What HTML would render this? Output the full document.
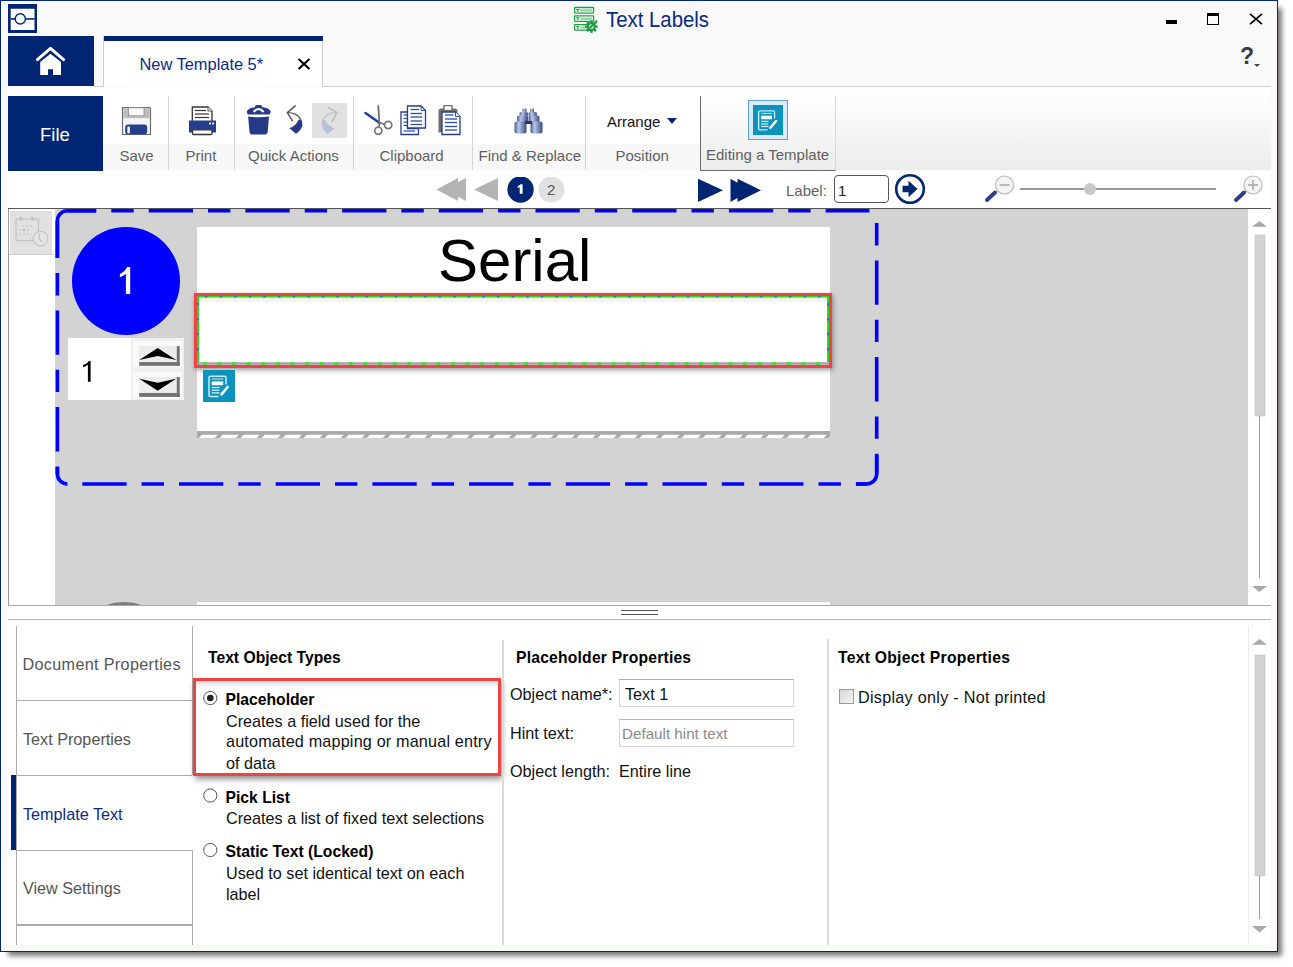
<!DOCTYPE html>
<html><head><meta charset="utf-8">
<style>
html,body{margin:0;padding:0}
body{width:1293px;height:967px;background:#fff;position:relative;overflow:hidden;font-family:"Liberation Sans",sans-serif}
.a{position:absolute}
.t{position:absolute;line-height:1;white-space:nowrap}
.navy{background:#002673}
.sep{position:absolute;width:1px;background:#d4d4d4}
.lbl{position:absolute;line-height:1;white-space:nowrap;font-size:15px;color:#5f5f5f}
</style></head>
<body>
<!-- window shadow -->
<div class="a" style="left:2px;top:2px;width:1276px;height:950px;box-shadow:5px 5px 5px -1px rgba(0,0,0,0.52)"></div>
<!-- window -->
<div class="a" id="win" style="left:0;top:0;width:1276px;height:950px;border:1px solid #002673;background:#f9f9f9;overflow:hidden">
</div>
<div class="a" id="content" style="left:0;top:0;width:1278px;height:952px">

<!-- ===== TITLE BAR ===== -->
<svg class="a" style="left:8px;top:4px" width="30" height="30" viewBox="0 0 30 30">
 <rect x="0" y="0" width="29" height="29" fill="#002673"/>
 <rect x="2.7" y="4.7" width="23.8" height="21.4" rx="0.6" fill="#fff"/>
 <line x1="2.7" y1="14.9" x2="26.5" y2="14.9" stroke="#002673" stroke-width="1.6"/>
 <circle cx="12.3" cy="14.9" r="5.1" fill="#fff" stroke="#002673" stroke-width="1.4"/>
</svg>

<svg class="a" style="left:568px;top:2px" width="36" height="34" viewBox="568 2 36 34">
 <g fill="#fff" stroke="#1f9e44" stroke-width="1.3">
  <rect x="574.6" y="7.5" width="19" height="5.6" rx="0.8"/>
  <rect x="574.6" y="15.8" width="19" height="5.6" rx="0.8"/>
  <rect x="574.6" y="24.6" width="19" height="5.6" rx="0.8"/>
 </g>
 <g fill="#8fd1a4"><rect x="580.3" y="9.3" width="12" height="2.2"/><rect x="580.3" y="17.6" width="12" height="2.2"/><rect x="580.3" y="26.4" width="8" height="2.2"/></g>
 <g fill="#1f9e44"><rect x="576.2" y="9" width="3.2" height="1.1"/><rect x="577.3" y="9" width="1.1" height="3"/><rect x="576.2" y="17.3" width="3.2" height="1.1"/><rect x="577.3" y="17.3" width="1.1" height="3"/><rect x="576.2" y="26.1" width="3.2" height="1.1"/><rect x="577.3" y="26.1" width="1.1" height="3"/></g>
 <g fill="#1f9e44"><rect x="590.20" y="20.30" width="2.4" height="2.6" transform="rotate(0 591.4 26.6)"/><rect x="590.20" y="20.30" width="2.4" height="2.6" transform="rotate(45 591.4 26.6)"/><rect x="590.20" y="20.30" width="2.4" height="2.6" transform="rotate(90 591.4 26.6)"/><rect x="590.20" y="20.30" width="2.4" height="2.6" transform="rotate(135 591.4 26.6)"/><rect x="590.20" y="20.30" width="2.4" height="2.6" transform="rotate(180 591.4 26.6)"/><rect x="590.20" y="20.30" width="2.4" height="2.6" transform="rotate(225 591.4 26.6)"/><rect x="590.20" y="20.30" width="2.4" height="2.6" transform="rotate(270 591.4 26.6)"/><rect x="590.20" y="20.30" width="2.4" height="2.6" transform="rotate(315 591.4 26.6)"/></g>
 <circle cx="591.4" cy="26.6" r="4.6" fill="#1f9e44"/>
 <circle cx="591.4" cy="26.6" r="2.4" fill="#fff"/>
 <path d="M590.3 27.6 L596.5 21.3" stroke="#1f9e44" stroke-width="2.2" stroke-linecap="round"/>
</svg>
<div class="t" style="left:605.5px;top:8.7px;font-size:22.5px;color:#0b2a82;transform:scaleX(0.905);transform-origin:0 0">Text Labels</div>

<!-- min max close -->
<div class="a" style="left:1166px;top:20px;width:11px;height:4px;background:#000"></div>
<div class="a" style="left:1207px;top:13px;width:10px;height:8px;border:1px solid #000;border-top-width:3px"></div>
<svg class="a" style="left:1249px;top:13px" width="14" height="12" viewBox="0 0 14 12"><path d="M1 0.8 L13 11.2 M13 0.8 L1 11.2" stroke="#000" stroke-width="1.6"/></svg>

<!-- help -->
<div class="t" style="left:1240px;top:45px;font-size:23px;font-weight:bold;color:#3c3c3c">?</div>
<svg class="a" style="left:1254px;top:64px" width="6" height="3" viewBox="0 0 6 3"><path d="M0 0 L6 0 L3 3 Z" fill="#444"/></svg>

<!-- ===== TAB ROW ===== -->
<div class="a navy" style="left:8px;top:36px;width:86px;height:50px"></div>
<svg class="a" style="left:25px;top:38px" width="50" height="44" viewBox="25 38 50 44">
 <path d="M37.4 59.6 L50.5 48.4 L63.6 59.6" fill="none" stroke="#fff" stroke-width="3" stroke-linecap="round" stroke-linejoin="round"/>
 <path d="M40.2 62 L50.5 53.8 L61 62 L61 75 L53 75 L53 69.2 L48 69.2 L48 75 L40.2 75 Z" fill="#fff"/>
</svg>
<div class="a" style="left:94px;top:86px;width:10px;height:1px;background:#cfcfcf"></div>
<div class="a" style="left:103px;top:36px;width:1px;height:51px;background:#cfcfcf"></div>
<div class="a" style="left:104px;top:36px;width:218px;height:50px;background:#fff"></div>
<div class="a navy" style="left:104px;top:36px;width:219px;height:5px"></div>
<div class="a" style="left:322px;top:41px;width:1px;height:46px;background:#cfcfcf"></div>
<div class="a" style="left:322px;top:86px;width:949px;height:1px;background:#cfcfcf"></div>
<div class="t" style="left:139.5px;top:55.6px;font-size:16.4px;color:#0b2a82">New Template 5*</div>
<svg class="a" style="left:297px;top:58px" width="14" height="12" viewBox="0 0 14 12"><path d="M1.5 1 L12.5 11 M12.5 1 L1.5 11" stroke="#000" stroke-width="2"/></svg>

<!-- ===== RIBBON ===== -->
<div class="a" style="left:8px;top:87px;width:1263px;height:83px;background:linear-gradient(#ffffff 0%,#fdfdfd 15%,#ececec 100%)"></div>
<div class="a" style="left:103px;top:87px;width:597px;height:83px;background:#fff"></div>
<div class="a" style="left:103px;top:144px;width:597px;height:26px;background:#f8f8f8"></div>
<div class="a navy" style="left:8px;top:96px;width:95px;height:75px"></div>
<div class="t" style="left:40px;top:125.5px;font-size:18.5px;color:#fff">File</div>

<div class="sep" style="left:168px;top:96px;height:74px"></div>
<div class="sep" style="left:234px;top:96px;height:74px"></div>
<div class="sep" style="left:353px;top:96px;height:74px"></div>
<div class="sep" style="left:472px;top:96px;height:74px"></div>
<div class="sep" style="left:585px;top:96px;height:74px"></div>

<!-- editing a template group -->
<div class="a" style="left:700px;top:96px;width:134px;height:74px;background:linear-gradient(#ffffff,#ececec);border-left:1px solid #6a6a6a;border-bottom:1px solid #6a6a6a;border-right:1px solid #d8d8d8"></div>

<div class="lbl" style="left:119.5px;top:148.3px">Save</div>
<div class="lbl" style="left:185.5px;top:148.3px">Print</div>
<div class="lbl" style="left:248px;top:148.3px">Quick Actions</div>
<div class="lbl" style="left:379.5px;top:148.3px">Clipboard</div>
<div class="lbl" style="left:478.5px;top:148.3px">Find &amp; Replace</div>
<div class="lbl" style="left:615.5px;top:148.3px">Position</div>
<div class="lbl" style="left:706px;top:147.3px">Editing a Template</div>
<div class="t" style="left:607px;top:113.8px;font-size:15px;color:#111">Arrange</div>
<svg class="a" style="left:667px;top:118px" width="10" height="6" viewBox="0 0 10 6"><path d="M0 0 L10 0 L5 6 Z" fill="#002673"/></svg>

<!-- ICONS placeholder -->

<!-- save icon -->
<svg class="a" style="left:121px;top:106px" width="31" height="30" viewBox="0 0 31 30">
 <path d="M1.5 1.5 H28.5 Q29.5 1.5 29.5 2.5 V28.5 H1.5 Z" fill="#f4f4f4" stroke="#6e6e6e" stroke-width="1.2"/>
 <rect x="2.2" y="2.2" width="26.6" height="10" fill="#bdbdbd"/>
 <rect x="7.5" y="1.8" width="15.5" height="8" fill="#fafafa" stroke="#8a8a8a" stroke-width="0.8"/>
 <rect x="4.2" y="18.5" width="22" height="10" rx="3" fill="#243f8c"/>
 <rect x="6.3" y="20.5" width="2.6" height="7" rx="1" fill="#f0f0f0"/>
</svg>
<!-- print icon -->
<svg class="a" style="left:188px;top:106px" width="29" height="30" viewBox="0 0 29 30">
 <path d="M4.3 15 V1 H20 L24 5 V15" fill="#fff" stroke="#333" stroke-width="1.3"/>
 <path d="M20 1 V5 H24" fill="#fff" stroke="#333" stroke-width="0.8"/>
 <g stroke="#333" stroke-width="1.2"><line x1="7" y1="4.5" x2="18" y2="4.5"/><line x1="7" y1="8" x2="21" y2="8"/><line x1="7" y1="11.5" x2="21" y2="11.5"/></g>
 <rect x="1" y="14.5" width="27" height="12" fill="#243f8c"/>
 <rect x="21" y="16.5" width="2" height="2" fill="#e8e8f4"/><rect x="24" y="16.5" width="2" height="2" fill="#e8e8f4"/>
 <rect x="4.5" y="23.8" width="19.5" height="4.7" rx="1" fill="#fff" stroke="#333" stroke-width="1.3"/>
</svg>
<!-- trash -->
<svg class="a" style="left:245px;top:104px" width="28" height="32" viewBox="245 104 28 32">
 <path d="M254.8 107.2 Q255 105.1 257 105.1 H260.2 Q262.3 105.1 262.4 107.2 Q269 108 270.5 111 Q271 114.5 268 114.5 H249.5 Q246.5 114.5 247 111 Q248.5 108 254.8 107.2 Z" fill="#243a86"/>
 <path d="M253.6 112 Q258.6 105.8 263.6 112" fill="none" stroke="#fff" stroke-width="2"/>
 <path d="M248.1 116.6 Q258.6 118 269 116.6 L267.7 131.8 Q267.5 134.6 264.5 134.6 H252.6 Q249.7 134.6 249.5 131.8 Z" fill="#243a86"/>
</svg>
<!-- undo -->
<svg class="a" style="left:284px;top:103px" width="22" height="34" viewBox="284 103 22 34">
 <path d="M295.3 105.9 L287.3 112.6 L292.4 120.8" fill="none" stroke="#5a5a5a" stroke-width="1.5" stroke-linecap="round" stroke-linejoin="round"/>
 <path d="M287.3 112.6 Q296.5 112.4 300.2 118.6 Q302.3 122.5 301.6 127" fill="none" stroke="#5a5a5a" stroke-width="1.3"/>
 <path d="M298.8 119.8 L301.6 120.4 Q303 125.5 300.4 129.5 Q298.5 132 296 133.6 L289.6 128.3 Q295.5 126.5 298.8 119.8 Z" fill="#243a86" stroke="#555" stroke-width="0.5"/>
</svg>
<!-- redo disabled -->
<div class="a" style="left:312px;top:103px;width:35px;height:35px;background:#e1e1e1"></div>
<svg class="a" style="left:315px;top:103px" width="26" height="34" viewBox="315 103 26 34">
 <path d="M328.2 107.4 L336.9 112.4 L331.9 121.9" fill="none" stroke="#b9b9b9" stroke-width="1.5" stroke-linecap="round" stroke-linejoin="round"/>
 <path d="M336.9 112.4 Q327 113 323.6 118.8 Q321.8 122.5 322.6 127" fill="none" stroke="#c2c2c2" stroke-width="1.3"/>
 <path d="M325.2 120 L322.4 120.6 Q321 125.5 323.4 129.5 Q325.2 132.3 327.4 133.9 L334.8 128.5 Q328.5 126.5 325.2 120 Z" fill="#b8bfd6"/>
</svg>
<!-- scissors -->
<svg class="a" style="left:364px;top:105px" width="30" height="31" viewBox="0 0 30 31">
 <path d="M1.5 8 L15 17.5" stroke="#243f8c" stroke-width="2.6" stroke-linecap="round"/>
 <path d="M14.3 1 L15.5 19.5" stroke="#6e6e6e" stroke-width="1.8" stroke-linecap="round"/>
 <path d="M15 17.2 L20.5 19.5" stroke="#6e6e6e" stroke-width="1.6"/>
 <circle cx="24.2" cy="20" r="3.6" fill="none" stroke="#777" stroke-width="1.7"/>
 <circle cx="14.3" cy="25.8" r="3.6" fill="none" stroke="#777" stroke-width="1.7"/>
 <path d="M15.2 19.5 L14.8 22" stroke="#777" stroke-width="1.6"/>
</svg>
<!-- copy -->
<svg class="a" style="left:400px;top:105px" width="27" height="31" viewBox="0 0 27 31">
 <path d="M1 7 H7.5 V23.5 H18.5 V29.5 H1 Z" fill="#fff" stroke="#243f8c" stroke-width="1.3"/>
 <g stroke="#2e4c9e" stroke-width="1.2"><line x1="3.5" y1="10" x2="7" y2="10"/><line x1="3.5" y1="13.5" x2="7" y2="13.5"/><line x1="3.5" y1="17" x2="7" y2="17"/><line x1="3.5" y1="20.5" x2="7" y2="20.5"/><line x1="3.5" y1="26" x2="15" y2="26"/></g>
 <path d="M7.5 1 H21 L25.5 5.5 V23 H7.5 Z" fill="#fff" stroke="#243f8c" stroke-width="1.3"/>
 <path d="M21 1 V5.5 H25.5" fill="none" stroke="#243f8c" stroke-width="0.9"/>
 <g stroke="#2e4c9e" stroke-width="1.3"><line x1="10.5" y1="4.5" x2="19" y2="4.5"/><line x1="10.5" y1="8.5" x2="22" y2="8.5"/><line x1="10.5" y1="12" x2="22" y2="12"/><line x1="10.5" y1="16" x2="22" y2="16"/><line x1="10.5" y1="19.5" x2="22" y2="19.5"/></g>
</svg>
<!-- paste -->
<svg class="a" style="left:437px;top:105px" width="25" height="31" viewBox="0 0 25 31">
 <path d="M1.5 6 Q1.5 3.5 4 3.5 H18 Q20.5 3.5 20.5 6 V27.5 H1.5 Z" fill="#6e6e6e"/>
 <rect x="7" y="0.5" width="8" height="5" fill="#fff" stroke="#6e6e6e" stroke-width="1.4"/>
 <path d="M5 7 H18.5 L23 11.5 V29.5 H5 Z" fill="#fff" stroke="#243f8c" stroke-width="1.3"/>
 <path d="M18.5 7 V11.5 H23" fill="#fff" stroke="#243f8c" stroke-width="0.9"/>
 <g stroke="#2e4c9e" stroke-width="1.3"><line x1="8" y1="10" x2="16.5" y2="10"/><line x1="8" y1="14" x2="20" y2="14"/><line x1="8" y1="17.5" x2="20" y2="17.5"/><line x1="8" y1="21.5" x2="20" y2="21.5"/><line x1="8" y1="25" x2="20" y2="25"/></g>
</svg>
<!-- binoculars -->
<svg class="a" style="left:513px;top:106px" width="31" height="29" viewBox="0 0 31 29">
 <defs><linearGradient id="bg1" x1="0" x2="1" y1="0" y2="0"><stop offset="0" stop-color="#4a5a8c"/><stop offset="0.35" stop-color="#b8c8ea"/><stop offset="1" stop-color="#3c4a80"/></linearGradient></defs>
 <g fill="url(#bg1)">
 <rect x="9.5" y="2.5" width="4" height="4" rx="1"/><rect x="17" y="2.5" width="4" height="4" rx="1"/>
 <rect x="6.5" y="6" width="8.5" height="4" rx="1.5"/><rect x="15.5" y="6" width="8.5" height="4" rx="1.5"/>
 <rect x="4" y="9.5" width="11" height="6.5" rx="1.5"/><rect x="15.5" y="9.5" width="11" height="6.5" rx="1.5"/>
 <rect x="1.5" y="15.5" width="12" height="12" rx="2"/><rect x="17.5" y="15.5" width="12" height="12" rx="2"/>
 </g>
 <rect x="12" y="15" width="7" height="3" fill="#2a3560"/>
</svg>
<!-- editing template icon -->
<div class="a" style="left:748px;top:100px;width:38px;height:38px;border:1px solid #5aa2e6;background:#dce9f6"></div>
<svg class="a" style="left:753px;top:105px" width="30" height="30" viewBox="0 0 32 32">
 <rect x="0" y="0" width="32" height="32" fill="#0a93bd"/>
 <path d="M23 14.5 V7.6 Q23 6.3 21.7 6.3 H7.3 Q6 6.3 6 7.6 V25.3 Q6 26.5 7.3 26.5 H15.5" fill="none" stroke="#cdebf4" stroke-width="1.5"/>
 <rect x="8.7" y="8.4" width="11.5" height="1.1" fill="#bfe4f0"/>
 <rect x="8.7" y="11.4" width="11.5" height="3.8" fill="#fff"/>
 <g stroke="#d5eef6" stroke-width="1.3"><line x1="8.7" y1="17.5" x2="16.5" y2="17.5"/><line x1="8.7" y1="20.2" x2="16.5" y2="20.2"/><line x1="8.7" y1="22.9" x2="16.5" y2="22.9"/></g>
 <path d="M18.5 24.3 L24.6 17" stroke="#fff" stroke-width="2.6" stroke-linecap="round"/>
</svg>


<!-- ===== NAV ROW ===== -->
<div class="a" style="left:8px;top:171px;width:1263px;height:37px;background:#fff"></div>
<div class="a" style="left:8px;top:208px;width:1263px;height:1px;background:#555"></div>

<!-- nav arrows -->
<svg class="a" style="left:436px;top:177px" width="130" height="26" viewBox="0 0 130 26">
 <path d="M0.5 12.5 L22 1 V24 Z" fill="#b3b3b3"/>
 <path d="M8 12.5 L30 1 V24 Z" fill="#b3b3b3"/>
 <path d="M38 12.5 L62 1 V24 Z" fill="#b3b3b3"/>
 <circle cx="84.5" cy="12.5" r="13.2" fill="#002673"/>
 <circle cx="115.5" cy="12.5" r="13" fill="#e1e1e1"/>
</svg>
<svg class="a" style="left:514px;top:182px" width="12" height="14" viewBox="514 182 12 14"><path d="M519.7 193.8 H522.6 V184.3 H520.6 Q519.6 185.5 517.8 185.9 V188 Q518.9 187.8 519.7 187.3 Z" fill="#fff"/></svg>
<div class="t" style="left:547px;top:182px;font-size:15px;color:#555">2</div>
<svg class="a" style="left:697px;top:178px" width="66" height="26" viewBox="0 0 66 26">
 <path d="M1 0.8 L26 12.3 L1 24 Z" fill="#002673"/>
 <path d="M33.5 0.8 L54 12.3 L33.5 24 Z" fill="#002673"/>
 <path d="M40.5 0.8 L64 12.3 L40.5 24 Z" fill="#002673"/>
</svg>
<div class="lbl" style="left:786px;top:183.3px;font-size:15px;color:#5f5f5f">Label:</div>
<div class="a" style="left:834px;top:175px;width:53px;height:26px;border:1px solid #555;border-radius:4px;background:#fff"></div>
<div class="t" style="left:838px;top:183.3px;font-size:15px;color:#222">1</div>
<svg class="a" style="left:894px;top:173px" width="32" height="32" viewBox="0 0 32 32">
 <circle cx="16" cy="16" r="13.8" fill="#fff" stroke="#002673" stroke-width="2.6"/>
 <path d="M8.5 12.8 H14.5 V7.8 L23.5 16 L14.5 24.2 V19.2 H8.5 Z" fill="#002673"/>
</svg>
<!-- zoom slider -->
<svg class="a" style="left:984px;top:173px" width="290" height="32" viewBox="0 0 290 32">
 <circle cx="20.5" cy="12" r="9" fill="#f4f4f4" stroke="#b9b9b9" stroke-width="1.2"/>
 <line x1="15.5" y1="12" x2="25.5" y2="12" stroke="#aaa" stroke-width="1.6"/>
 <path d="M3 27 L11 19.5" stroke="#2a3f88" stroke-width="4" stroke-linecap="round"/>
 <line x1="36" y1="16" x2="232" y2="16" stroke="#999" stroke-width="2"/>
 <circle cx="106" cy="16" r="6" fill="#c9c9c9"/>
 <circle cx="269" cy="12" r="9" fill="#f4f4f4" stroke="#b9b9b9" stroke-width="1.2"/>
 <line x1="264" y1="12" x2="274" y2="12" stroke="#aaa" stroke-width="1.6"/>
 <line x1="269" y1="7" x2="269" y2="17" stroke="#aaa" stroke-width="1.6"/>
 <path d="M252 27 L260 19.5" stroke="#2a3f88" stroke-width="4" stroke-linecap="round"/>
</svg>

<!-- ===== CANVAS ===== -->
<div class="a" style="left:8px;top:209px;width:1263px;height:396px;background:#d3d3d3"></div>
<div class="a" style="left:8px;top:209px;width:47px;height:396px;background:#fff;box-shadow:inset 1px 0 0 #9a9a9a"></div>
<div class="a" style="left:10px;top:211px;width:42px;height:43px;background:#e1e1e1"></div>
<div class="a" style="left:9px;top:254px;width:45px;height:1px;background:#cfcfcf"></div>
<svg class="a" style="left:10px;top:211px" width="42" height="43" viewBox="10 211 42 43">
 <rect x="16" y="219" width="22.5" height="21.5" fill="none" stroke="#c4c4c4" stroke-width="1.3"/>
 <rect x="19.5" y="216.5" width="2.6" height="4.5" rx="1" fill="#c4c4c4"/><rect x="31" y="216.5" width="2.6" height="4.5" rx="1" fill="#c4c4c4"/>
 <g fill="#d0d0d0"><rect x="22" y="225" width="2" height="2"/><rect x="26" y="225" width="2" height="2"/><rect x="30" y="225" width="2" height="2"/><rect x="19" y="229" width="2" height="2"/><rect x="27" y="229" width="2" height="2"/><rect x="19" y="233" width="2" height="2"/><rect x="23" y="233" width="2" height="2"/><rect x="27" y="233" width="2" height="2"/></g>
 <rect x="23" y="229" width="2" height="2" fill="#aab2cc"/>
 <circle cx="40.5" cy="238.5" r="7.2" fill="#e4e4e4" stroke="#c4c4c4" stroke-width="1.1"/>
 <path d="M38.8 232.8 L39.6 239 L42.5 242.2" fill="none" stroke="#b5bccb" stroke-width="1.1"/>
</svg>
<div class="a" style="left:1248px;top:209px;width:23px;height:396px;background:#fff"></div>
<svg class="a" style="left:1250px;top:218px" width="20" height="380" viewBox="0 0 20 380">
 <path d="M2 8.8 L9.5 3 L17 8.8 Z" fill="#a9a9a9"/>
 <rect x="5" y="17" width="10" height="181" fill="#d2d2d2" stroke="#c4c4c4" stroke-width="0.6"/>
 <line x1="9.5" y1="198" x2="9.5" y2="360" stroke="#9a9a9a" stroke-width="1"/>
 <path d="M2 368 L17 368 L9.5 374 Z" fill="#a9a9a9"/>
</svg>

<!-- label card -->
<div class="a" style="left:197px;top:227px;width:633px;height:204px;background:#fff"></div>
<svg class="a" style="left:197px;top:431px" width="633" height="7" viewBox="0 0 633 7">
 <rect x="0" y="0" width="633" height="7" fill="#a9a9a9"/>
 <g fill="#fff"><path d="M-16.3 3.8 H-0.3 L-3.3 7 H-19.3 Z"/><path d="M4.7 3.8 H20.7 L17.7 7 H1.7 Z"/><path d="M25.7 3.8 H41.7 L38.7 7 H22.7 Z"/><path d="M46.7 3.8 H62.7 L59.7 7 H43.7 Z"/><path d="M67.7 3.8 H83.7 L80.7 7 H64.7 Z"/><path d="M88.7 3.8 H104.7 L101.7 7 H85.7 Z"/><path d="M109.7 3.8 H125.7 L122.7 7 H106.7 Z"/><path d="M130.7 3.8 H146.7 L143.7 7 H127.7 Z"/><path d="M151.7 3.8 H167.7 L164.7 7 H148.7 Z"/><path d="M172.7 3.8 H188.7 L185.7 7 H169.7 Z"/><path d="M193.7 3.8 H209.7 L206.7 7 H190.7 Z"/><path d="M214.7 3.8 H230.7 L227.7 7 H211.7 Z"/><path d="M235.7 3.8 H251.7 L248.7 7 H232.7 Z"/><path d="M256.7 3.8 H272.7 L269.7 7 H253.7 Z"/><path d="M277.7 3.8 H293.7 L290.7 7 H274.7 Z"/><path d="M298.7 3.8 H314.7 L311.7 7 H295.7 Z"/><path d="M319.7 3.8 H335.7 L332.7 7 H316.7 Z"/><path d="M340.7 3.8 H356.7 L353.7 7 H337.7 Z"/><path d="M361.7 3.8 H377.7 L374.7 7 H358.7 Z"/><path d="M382.7 3.8 H398.7 L395.7 7 H379.7 Z"/><path d="M403.7 3.8 H419.7 L416.7 7 H400.7 Z"/><path d="M424.7 3.8 H440.7 L437.7 7 H421.7 Z"/><path d="M445.7 3.8 H461.7 L458.7 7 H442.7 Z"/><path d="M466.7 3.8 H482.7 L479.7 7 H463.7 Z"/><path d="M487.7 3.8 H503.7 L500.7 7 H484.7 Z"/><path d="M508.7 3.8 H524.7 L521.7 7 H505.7 Z"/><path d="M529.7 3.8 H545.7 L542.7 7 H526.7 Z"/><path d="M550.7 3.8 H566.7 L563.7 7 H547.7 Z"/><path d="M571.7 3.8 H587.7 L584.7 7 H568.7 Z"/><path d="M592.7 3.8 H608.7 L605.7 7 H589.7 Z"/><path d="M613.7 3.8 H629.7 L626.7 7 H610.7 Z"/><path d="M634.7 3.8 H650.7 L647.7 7 H631.7 Z"/></g>
</svg>
<div class="t" style="left:438px;top:230.8px;font-size:60px;color:#000">Serial</div>

<!-- selected object -->
<div class="a" style="left:194px;top:293px;width:638px;height:74.5px;box-shadow:1px 2px 5px rgba(0,0,0,0.4)"></div>
<div class="a" style="left:194px;top:293px;width:632px;height:68.5px;border:3px solid #f04242;background:#fff"></div>
<div class="a" style="left:197px;top:296px;width:632px;height:8px;background:linear-gradient(#e6e6e6,#fff)"></div>
<svg class="a" style="left:197px;top:296px" width="632" height="69" viewBox="0 0 632 69">
 <line x1="0" y1="0.8" x2="632" y2="0.8" stroke="#22dd22" stroke-width="1.6"/>
 <line x1="0" y1="0.8" x2="632" y2="0.8" stroke="#2a7ab8" stroke-width="1.6" stroke-dasharray="2.5 12.1" stroke-dashoffset="-8"/>
 <line x1="1" y1="0" x2="1" y2="69" stroke="#22dd22" stroke-width="2"/>
 <line x1="1" y1="0" x2="1" y2="69" stroke="#2a7ab8" stroke-width="2" stroke-dasharray="2.5 12.5" stroke-dashoffset="-7"/>
 <line x1="631" y1="0" x2="631" y2="66" stroke="#22dd22" stroke-width="2"/>
 <line x1="631" y1="0" x2="631" y2="66" stroke="#2a7ab8" stroke-width="2" stroke-dasharray="2.5 12.5" stroke-dashoffset="-7"/>
 <line x1="0" y1="67.5" x2="632" y2="67.5" stroke="#a3a3a3" stroke-width="2.6"/>
 <line x1="0" y1="67.5" x2="632" y2="67.5" stroke="#22ee22" stroke-width="2.6" stroke-dasharray="4 10.6" stroke-dashoffset="-5.8"/>
</svg>
<svg class="a" style="left:203px;top:370px" width="32" height="32" viewBox="0 0 32 32">
 <rect x="0" y="0" width="32" height="32" fill="#0a93bd"/>
 <path d="M23 14.5 V7.6 Q23 6.3 21.7 6.3 H7.3 Q6 6.3 6 7.6 V25.3 Q6 26.5 7.3 26.5 H15.5" fill="none" stroke="#cdebf4" stroke-width="1.5"/>
 <rect x="8.7" y="8.4" width="11.5" height="1.1" fill="#bfe4f0"/>
 <rect x="8.7" y="11.4" width="11.5" height="3.8" fill="#fff"/>
 <g stroke="#d5eef6" stroke-width="1.3"><line x1="8.7" y1="17.5" x2="16.5" y2="17.5"/><line x1="8.7" y1="20.2" x2="16.5" y2="20.2"/><line x1="8.7" y1="22.9" x2="16.5" y2="22.9"/></g>
 <path d="M18.5 24.3 L24.6 17" stroke="#fff" stroke-width="2.6" stroke-linecap="round"/>
</svg>

<!-- number circle + spinner -->
<div class="a" style="left:72px;top:227px;width:108px;height:108px;border-radius:50%;background:#0000ff"></div>
<svg class="a" style="left:110px;top:260px" width="30" height="40" viewBox="110 260 30 40"><path d="M125.9 294 H130.2 V266.9 H127.2 Q125.8 270.2 122.8 272.2 Q121.5 273.2 119.9 273.9 V277.2 Q123.4 275.8 125.9 273.7 Z" fill="#fff"/></svg>
<div class="a" style="left:68px;top:338px;width:116px;height:62px;background:#f0f0f0"></div>
<div class="a" style="left:68px;top:338px;width:63px;height:62px;background:#fff"></div>
<svg class="a" style="left:78px;top:358px" width="16" height="27" viewBox="78 358 16 27"><path d="M87.9 381.8 H90.6 V361 H88.8 Q87.7 363 85.6 364.1 Q84.4 364.6 83 365 V367.3 Q85.9 366.4 87.9 364.8 Z" fill="#000"/></svg>
<svg class="a" style="left:128px;top:335px" width="60" height="70" viewBox="128 335 60 70">
 <rect x="133" y="341" width="49" height="26" fill="#fafafa"/>
 <rect x="133" y="372" width="49" height="27" fill="#fafafa"/>
 <rect x="139.2" y="346" width="40.5" height="20" fill="#ececec"/>
 <rect x="139.2" y="377" width="40.5" height="20" fill="#ececec"/>
 <path d="M139.2 360 L157.7 348 L176.1 360 L157.7 356 Z" fill="#000"/>
 <rect x="139.2" y="362.1" width="40.5" height="3.7" fill="#727272"/>
 <rect x="176.8" y="346.2" width="2.9" height="19.6" fill="#727272"/>
 <path d="M139.2 378.8 L157.7 382.8 L176.1 378.8 L157.7 390.7 Z" fill="#000"/>
 <rect x="139.2" y="393" width="40.5" height="3.9" fill="#727272"/>
 <rect x="176.8" y="377" width="2.9" height="19.9" fill="#727272"/>
</svg>

<!-- dashed frame -->
<svg class="a" style="left:0;top:0" width="1278" height="610" viewBox="0 0 1278 610" fill="none" stroke="#0000ff" stroke-width="3.6">
 <path d="M57.4 258 V220.8 A10 10 0 0 1 67.4 210.8 H96"/>
 <line x1="67.4" y1="210.8" x2="869.5" y2="210.8" stroke-dasharray="44.3 15 22.4 15" stroke-dashoffset="15.4"/>
 <line x1="876.7" y1="220.8" x2="876.7" y2="474" stroke-dasharray="44.3 15 22.4 15" stroke-dashoffset="57.1"/>
 <path d="M876.7 455 V474 A10 10 0 0 1 866.7 484 H856"/>
 <line x1="67.4" y1="484" x2="866.7" y2="484" stroke-dasharray="44.3 15 22.4 15" stroke-dashoffset="81.8"/>
 <path d="M57.4 467 V474 A10 10 0 0 0 67.4 484"/>
 <line x1="57.4" y1="220.8" x2="57.4" y2="474" stroke-dasharray="44.3 15 22.4 15" stroke-dashoffset="7.1"/>
</svg>

<!-- bottom peeking label -->
<div class="a" style="left:197px;top:602px;width:633px;height:3px;background:#fff"></div>
<svg class="a" style="left:90px;top:600px" width="72" height="5" viewBox="90 600 72 5"><circle cx="124" cy="656.5" r="54.5" fill="#7a7a7a"/></svg>
<div class="a" style="left:8px;top:605px;width:1263px;height:1px;background:#a8a8a8"></div>

<!-- splitter -->
<div class="a" style="left:8px;top:606px;width:1263px;height:13px;background:#fff"></div>
<div class="a" style="left:621px;top:610px;width:37px;height:1px;background:#555"></div>
<div class="a" style="left:621px;top:614px;width:37px;height:1px;background:#555"></div>
<div class="a" style="left:8px;top:619px;width:1263px;height:1px;background:#b5b5b5"></div>

<!-- ===== BOTTOM PANEL ===== -->
<div class="a" style="left:8px;top:620px;width:1263px;height:325px;background:#fff"></div>
<!-- tabs -->
<div class="a" style="left:16px;top:626px;width:1px;height:319px;background:#ababab"></div>
<div class="a" style="left:192px;top:626px;width:1px;height:149px;background:#ababab"></div>
<div class="a" style="left:192px;top:850px;width:1px;height:95px;background:#ababab"></div>
<div class="a" style="left:16px;top:700px;width:176px;height:1px;background:#ababab"></div>
<div class="a" style="left:16px;top:775px;width:176px;height:1px;background:#ababab"></div>
<div class="a" style="left:16px;top:850px;width:177px;height:1px;background:#ababab"></div>
<div class="a" style="left:16px;top:924px;width:177px;height:2px;background:#ababab"></div>
<div class="a" style="left:11px;top:775px;width:5px;height:75px;background:#002673"></div>
<div class="t" style="left:22.5px;top:655.9px;font-size:16.2px;letter-spacing:0.33px;color:#555">Document Properties</div>
<div class="t" style="left:23px;top:730.8px;font-size:16.2px;color:#555">Text Properties</div>
<div class="t" style="left:23px;top:805.7px;font-size:16.2px;color:#0b2a82">Template Text</div>
<div class="t" style="left:23px;top:880.2px;font-size:16.2px;color:#555">View Settings</div>

<!-- middle: Text Object Types -->
<div class="t" style="left:208px;top:649.6px;font-size:15.7px;font-weight:bold;color:#000">Text Object Types</div>
<div class="a" style="left:194px;top:679px;width:307px;height:97px;box-shadow:1px 3px 6px rgba(0,0,0,0.45)"></div>
<div class="a" style="left:193px;top:678px;width:302px;height:92px;border:3px solid #ee4444;background:linear-gradient(#d9d9d9 0px,#f4f4f4 4px,#fff 8px)"></div>
<svg class="a" style="left:202px;top:689px" width="17" height="180" viewBox="0 0 17 180">
 <circle cx="8.3" cy="9" r="6.6" fill="#fff" stroke="#555" stroke-width="1"/>
 <circle cx="8.3" cy="9" r="3.3" fill="#222"/>
 <circle cx="8.3" cy="106.5" r="6.6" fill="#fff" stroke="#555" stroke-width="1"/>
 <circle cx="8.3" cy="161" r="6.6" fill="#fff" stroke="#555" stroke-width="1"/>
</svg>
<div class="t" style="left:225.5px;top:692.2px;font-size:15.7px;font-weight:bold;color:#000">Placeholder</div>
<div class="t" style="left:226px;top:712.8px;font-size:16.2px;color:#111">Creates a field used for the</div>
<div class="t" style="left:226px;top:733.3px;font-size:16.2px;letter-spacing:0.17px;color:#111">automated mapping or manual entry</div>
<div class="t" style="left:226px;top:754.9px;font-size:16.2px;color:#111">of data</div>
<div class="t" style="left:225.5px;top:789.9px;font-size:15.7px;font-weight:bold;color:#000">Pick List</div>
<div class="t" style="left:226px;top:809.5px;font-size:16.2px;color:#111">Creates a list of fixed text selections</div>
<div class="t" style="left:225.5px;top:844.3px;font-size:15.7px;font-weight:bold;color:#000">Static Text (Locked)</div>
<div class="t" style="left:226px;top:864.7px;font-size:16.2px;color:#111">Used to set identical text on each</div>
<div class="t" style="left:226px;top:885.5px;font-size:16.2px;color:#111">label</div>

<div class="a" style="left:502px;top:640px;width:2px;height:305px;background:#dcdcdc"></div>
<!-- placeholder properties -->
<div class="t" style="left:516px;top:649.6px;font-size:15.7px;letter-spacing:0.2px;font-weight:bold;color:#000">Placeholder Properties</div>
<div class="t" style="left:510px;top:686px;font-size:16.2px;color:#111">Object name*:</div>
<div class="a" style="left:619px;top:679px;width:173px;height:26px;border:1px solid #d5d5d5;border-top-color:#a9a9a9;background:#fff"></div>
<div class="t" style="left:625px;top:686px;font-size:16.2px;color:#111">Text 1</div>
<div class="t" style="left:510px;top:725.3px;font-size:16.2px;color:#111">Hint text:</div>
<div class="a" style="left:619px;top:719px;width:173px;height:26px;border:1px solid #d5d5d5;border-top-color:#b9b9b9;background:#fff"></div>
<div class="t" style="left:622px;top:726.1px;font-size:15.2px;color:#8a8a8a">Default hint text</div>
<div class="t" style="left:510px;top:763px;font-size:16.2px;color:#111">Object length:</div>
<div class="t" style="left:619px;top:763px;font-size:16.2px;color:#111">Entire line</div>

<div class="a" style="left:827px;top:639px;width:2px;height:306px;background:#dcdcdc"></div>
<!-- text object properties -->
<div class="t" style="left:838px;top:649.6px;font-size:15.7px;letter-spacing:0.27px;font-weight:bold;color:#000">Text Object Properties</div>
<div class="a" style="left:839px;top:689px;width:13px;height:13px;border:1px solid #9a9a9a;background:linear-gradient(135deg,#d8d8d8,#f4f4f4)"></div>
<div class="t" style="left:858px;top:688.7px;font-size:16.2px;letter-spacing:0.27px;color:#111">Display only - Not printed</div>

<!-- bottom scroll -->
<div class="a" style="left:1248px;top:626px;width:1px;height:318px;background:#ececec"></div>
<svg class="a" style="left:1250px;top:636px" width="20" height="300" viewBox="0 0 20 300">
 <path d="M2 8.8 L9.5 3 L17 8.8 Z" fill="#a9a9a9"/>
 <rect x="5" y="19" width="10" height="221" fill="#d2d2d2" stroke="#c4c4c4" stroke-width="0.6"/>
 <line x1="9.5" y1="240" x2="9.5" y2="283" stroke="#9a9a9a" stroke-width="1"/>
 <path d="M2 290 L17 290 L9.5 296.4 Z" fill="#a9a9a9"/>
</svg>

</div>
</body></html>
